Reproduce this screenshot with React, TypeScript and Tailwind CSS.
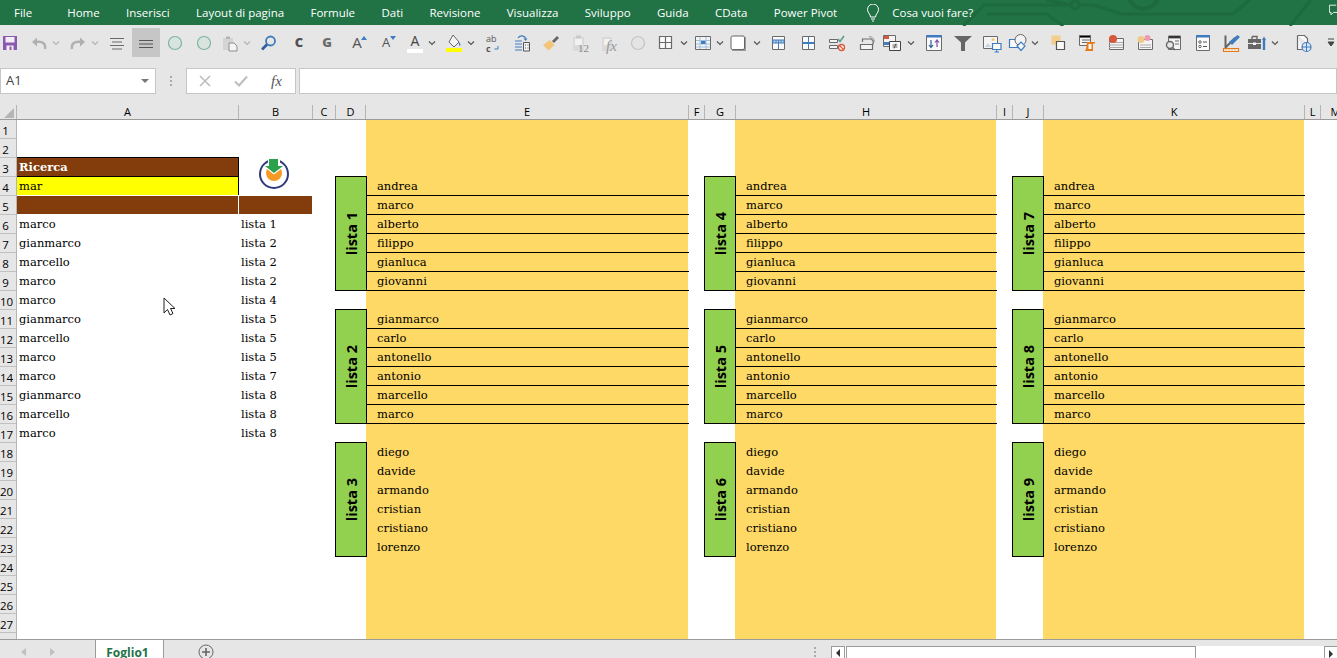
import type { ReactNode } from "react";

const tabs = ["Home", "Inserisci", "Layout di pagina", "Formule", "Dati", "Revisione", "Visualizza", "Sviluppo", "Guida", "CData", "Power Pivot"];

const results = [
  ["marco", "lista 1"],
  ["gianmarco", "lista 2"],
  ["marcello", "lista 2"],
  ["marco", "lista 2"],
  ["marco", "lista 4"],
  ["gianmarco", "lista 5"],
  ["marcello", "lista 5"],
  ["marco", "lista 5"],
  ["marco", "lista 7"],
  ["gianmarco", "lista 8"],
  ["marcello", "lista 8"],
  ["marco", "lista 8"],
];

const names = [
  ["andrea", "marco", "alberto", "filippo", "gianluca", "giovanni"],
  ["gianmarco", "carlo", "antonello", "antonio", "marcello", "marco"],
  ["diego", "davide", "armando", "cristian", "cristiano", "lorenzo"],
];

const rowNumbers = Array.from({ length: 27 }, (_, i) => i + 1);

const serif = "font-['DejaVu_Serif',serif] text-[11.5px] text-black";

function Icon({ ml, children }: { ml: string; children: ReactNode }) {
  return (
    <svg viewBox="0 0 20 20" className={`h-5 w-5 shrink-0 overflow-visible ${ml}`}>
      {children}
    </svg>
  );
}

function Caret({ ml, light }: { ml: string; light?: boolean }) {
  return (
    <svg viewBox="0 0 8 8" className={`h-2 w-2 shrink-0 ${ml}`}>
      <path d="M1 2.5 4 5.5 7 2.5" fill="none" stroke={light ? "#b4b4b4" : "#555"} strokeWidth="1.2" />
    </svg>
  );
}

function Letter({ ml, className, children }: { ml: string; className: string; children: ReactNode }) {
  return <span className={`flex h-5 w-5 shrink-0 items-center justify-center font-['Open_Sans',sans-serif] ${ml} ${className}`}>{children}</span>;
}

function Toolbar() {
  const gray = "#6a6a6a";
  const blue = "#3f7cbf";
  return (
    <div className="flex h-[35px] items-center overflow-hidden bg-[#e6e6e6]">
      <Icon ml="ml-0">
        <path d="M3 3h14v14H3z" fill="#8a5aae" />
        <path d="M5.500 4h9v5.500h-9zM6.500 12.500h7V17h-7z" fill="#f3eef7" />
        <path d="M9.500 13.500h2V17h-2z" fill="#8a5aae" />
      </Icon>
      <Icon ml="ml-[9px]">
        <path d="M16 16c1-5-2-8-9-7" fill="none" stroke="#b0b0b0" strokeWidth="2.400" />
        <path d="M3 9 8 4.500v9z" fill="#b0b0b0" />
      </Icon>
      <Caret ml="ml-[3px]" light />
      <Icon ml="ml-2">
        <path d="M4 16c-1-5 2-8 9-7" fill="none" stroke="#b0b0b0" strokeWidth="2.400" />
        <path d="M17 9 12 4.500v9z" fill="#b0b0b0" />
      </Icon>
      <Caret ml="ml-[3px]" light />
      <Icon ml="ml-2">
        <path d="M3 5.500h14M5 9h10M3 12.500h14M5 16h10" stroke={gray} strokeWidth="1" />
      </Icon>
      <div className="ml-[5px] flex h-[29px] w-[28px] shrink-0 items-center justify-center bg-[#c6c6c6]">
        <svg viewBox="0 0 20 20" className="h-5 w-5">
          <path d="M3 7.500h14M3 11h14M3 14.500h14" stroke="#555" strokeWidth="1" />
        </svg>
      </div>
      <Icon ml="ml-[5px]">
        <circle cx="10" cy="10" r="6.500" fill="#d9e4df" stroke="#7fb3a1" strokeWidth="1.200" />
      </Icon>
      <Icon ml="ml-[9px]">
        <circle cx="10" cy="10" r="6.500" fill="#d9e4df" stroke="#7fb3a1" strokeWidth="1.200" />
      </Icon>
      <Icon ml="ml-[6px]">
        <path d="M3 5h10v12H3z" fill="#d4d4d4" />
        <path d="M6 3.500h4V6H6z" fill="#b4b4b4" />
        <path d="M9 10h5l3 3v5H9z" fill="#f4f4f4" stroke="#8d8d8d" strokeWidth="1" />
      </Icon>
      <Caret ml="ml-[3px]" light />
      <Icon ml="ml-2">
        <circle cx="11.500" cy="8" r="4.500" fill="none" stroke={blue} strokeWidth="1.800" />
        <path d="M8 11.500 3 16.500" stroke="#2f5f9e" strokeWidth="2.600" />
      </Icon>
      <Letter ml="ml-2.5" className="text-[13px] font-extrabold text-[#505050]">C</Letter>
      <Letter ml="ml-2" className="text-[13px] font-extrabold text-[#6a6a6a]">G</Letter>
      <span className="relative ml-2.5">
        <Letter ml="ml-0" className="text-[15px] text-[#555]">A</Letter>
        <svg viewBox="0 0 6 4" className="absolute right-0 top-[3px] h-1 w-1.5"><path d="M0 4 3 0l3 4z" fill={blue} /></svg>
      </span>
      <span className="relative ml-[9px]">
        <Letter ml="ml-0" className="text-[13px] text-[#555]">A</Letter>
        <svg viewBox="0 0 6 4" className="absolute right-0 top-[3px] h-1 w-1.5"><path d="M0 0h6L3 4z" fill={blue} /></svg>
      </span>
      <span className="relative ml-[9px] flex h-5 w-5 flex-col items-center">
        <span className="font-['Open_Sans',sans-serif] text-[14px] leading-[15px] text-[#444]">A</span>
        <span className="mt-[1px] h-[4px] w-4 bg-white" />
      </span>
      <Caret ml="ml-[3px]" />
      <Icon ml="ml-2">
        <path d="M9 2 15 9l-5 5-5-5z" fill="#f4f4f4" stroke="#666" strokeWidth="1" />
        <path d="M15 9c1.500 2 2 3 1 4-1-.5-1.500-2-1-4z" fill={blue} />
        <path d="M2 15h16v4H2z" fill="#ffff00" />
      </Icon>
      <Caret ml="ml-[3px]" />
      <Icon ml="ml-[7px]">
        <text x="4" y="8.500" fontSize="9" fontFamily="Open Sans" fill="#555">ab</text>
        <text x="4" y="19" fontSize="9" fontFamily="Open Sans" fontWeight="700" fill="#555">c</text>
        <path d="M16 13v3h-3.500" fill="none" stroke={blue} strokeWidth="1" />
      </Icon>
      <Icon ml="ml-2.5">
        <path d="M3 8h7M3 11h7M3 14h7M3 17h7" stroke={blue} strokeWidth="1.200" />
        <path d="M6 5c2-3 6-3 8 .5" fill="none" stroke={blue} strokeWidth="1.200" />
        <path d="M11.500 5.500h4l-2 2.500z" fill={blue} />
        <path d="M11.500 9.500h6v8.500h-6z" fill="#f4f4f4" stroke="#555" strokeWidth="1" />
        <path d="M13 12h1M15.500 12h1M13 15h1M15.500 15h1" stroke="#555" strokeWidth="1" />
      </Icon>
      <Icon ml="ml-[9px]">
        <path d="M2 12 9 7l4.500 5-6 5.500z" fill="#f3c677" />
        <path d="M11 8 16 3l2 2-5 5z" fill="#666" />
      </Icon>
      <Icon ml="ml-[9px]">
        <path d="M3 4h11v14H3z" fill="#dadada" />
        <path d="M5 6h7v6H5z" fill="#f2f2f2" />
        <path d="M6 2.500h5V5H6z" fill="#c8c8c8" />
        <text x="8" y="18.500" fontSize="11" fontFamily="Liberation Serif" fill="#888">12</text>
      </Icon>
      <Icon ml="ml-[9px]">
        <path d="M3 4h10v14H3z" fill="#dadada" />
        <path d="M5 6h6v6H5z" fill="#f2f2f2" />
        <text x="7" y="18" fontSize="15" fontStyle="italic" fontFamily="Liberation Serif" fill="#999">fx</text>
      </Icon>
      <Icon ml="ml-[9px]">
        <circle cx="10" cy="10" r="6.500" fill="#e4e4e4" stroke="#c4c4c4" strokeWidth="1.200" />
      </Icon>
      <Icon ml="ml-2">
        <path d="M3.500 3.500h12v12h-12zM9.500 3.500v12M3.500 9.500h12" fill="#fafafa" stroke={gray} strokeWidth="1.200" />
      </Icon>
      <Caret ml="ml-1" />
      <Icon ml="ml-[5px]">
        <path d="M2.500 3.500h15v13h-15z" fill="#f4f4f4" stroke={gray} strokeWidth="1" />
        <path d="M3 7.500h14M3 11h14M3 14h14M7 4v12M13 4v12" stroke="#9fc0dd" strokeWidth="1" />
        <path d="M8 8h4.500v3H8z" fill={blue} />
      </Icon>
      <Caret ml="ml-[3px]" />
      <Icon ml="ml-1">
        <path d="M4 4h14v14H4z" fill="#9a9a9a" />
        <rect x="3" y="3" width="13.500" height="13.500" rx="1.500" fill="#fff" stroke="#666" strokeWidth="1" />
      </Icon>
      <Caret ml="ml-[5px]" />
      <Icon ml="ml-2">
        <path d="M3.500 3.500h12v13h-12z" fill="#fafafa" stroke={gray} strokeWidth="1" />
        <path d="M4 7h11v3H4z" fill="#bcd3ea" stroke={blue} strokeWidth="1" />
        <path d="M7 7v3M9.500 7v3M12 7v3M9.500 10v6" stroke={blue} strokeWidth="1" />
      </Icon>
      <Icon ml="ml-2.5">
        <path d="M3.500 3.500h12v13h-12z" fill="#fafafa" stroke={gray} strokeWidth="1" />
        <path d="M3.500 10h12" stroke={blue} strokeWidth="2" />
        <path d="M9.500 4v5.500M9.500 11v5" stroke={blue} strokeWidth="1" />
      </Icon>
      <Icon ml="ml-2">
        <path d="M2.500 6.500h8v3h-8zM2.500 12.500h8v3h-8z" fill="#f4f4f4" stroke={gray} strokeWidth="1" />
        <path d="M11 6 13 8.500 17 3" fill="none" stroke="#5f9e86" strokeWidth="1.600" />
        <circle cx="14.500" cy="14.500" r="3" fill="#fff" stroke="#d9573a" strokeWidth="1.300" />
        <path d="M12.500 12.500 16.500 16.500" stroke="#d9573a" strokeWidth="1.200" />
      </Icon>
      <Icon ml="ml-2.5">
        <path d="M3.500 11.500h12v5h-12z" fill="#f4f4f4" stroke={gray} strokeWidth="1.200" />
        <path d="M5.500 9V6h9l2 3-1 3" fill="none" stroke={gray} strokeWidth="1.200" />
        <path d="M12 3.500c3 0 5 2 5.500 5M13 5.500c2 0 3 1 3.500 3" fill="none" stroke="#999" strokeWidth="1" />
      </Icon>
      <Icon ml="ml-[5px]">
        <path d="M1.500 2.500h12v11h-12z" fill="#f4f4f4" stroke={gray} strokeWidth="1" />
        <path d="M2 3h5v3H2z" fill="#d9573a" />
        <path d="M2 9h5v3H2z" fill="#3f7cbf" />
        <path d="M7.500 8.500h11v9h-11z" fill="#fafafa" stroke="#444" strokeWidth="1" />
        <path d="M10.500 12h5M10.500 14h5M14 10.500 12 15.500" stroke="#444" strokeWidth=".8" />
      </Icon>
      <Caret ml="ml-[5px]" />
      <Icon ml="ml-[9px]">
        <path d="M2.500 2.500h15v15h-15z" fill="#fafafa" stroke={gray} strokeWidth="1" />
        <path d="M2.500 2h15v2.500h-15z" fill={blue} />
        <path d="M7 7v7M5 12l2 2.500L9 12" fill="none" stroke="#2f5f9e" strokeWidth="1.200" />
        <path d="M13 14V7M11 9.500 13 7l2 2.500" fill="none" stroke="#7d4fa8" strokeWidth="1.200" />
      </Icon>
      <Icon ml="ml-[9px]">
        <path d="M1 3h18l-7 6.500V18H8V9.500z" fill="#666" />
      </Icon>
      <Icon ml="ml-[9px]">
        <path d="M1.500 3.500h14v12h-14z" fill="#f4f4f4" stroke={gray} strokeWidth="1" />
        <path d="M3 14l3-4 3 4z" fill="#c8d6e6" />
        <circle cx="11" cy="6.500" r="1.500" fill="#f2c66d" />
        <path d="M10.500 10.500h8.500v6h-8.500z" fill="#fafafa" stroke={blue} strokeWidth="1.200" />
        <path d="M14.700 17v2M12.500 19h4.500" stroke={blue} strokeWidth="1" />
      </Icon>
      <Icon ml="ml-[6px]">
        <path d="M1.500 6.500h9v8h-9z" fill="#fafafa" stroke={blue} strokeWidth="1.200" />
        <circle cx="12.500" cy="7" r="5.500" fill="#f4f4f4" stroke="#666" strokeWidth="1" />
        <path d="M9 13l4-4 4 4-4 4.500z" fill="#fafafa" stroke={blue} strokeWidth="1.200" />
      </Icon>
      <Caret ml="ml-[3px]" />
      <Icon ml="ml-[9px]">
        <path d="M3.500 2.500h9v9h-9z" fill="#f3cd8c" />
        <path d="M8.500 8.500h8v8h-8z" fill="#fafafa" stroke="#555" strokeWidth="1.200" />
      </Icon>
      <Icon ml="ml-[9px]">
        <path d="M2.500 2.500h11v10h-11z" fill="#f4f4f4" stroke={gray} strokeWidth="1" />
        <path d="M2.500 2.500h11v2h-11zM5 7h8M5 9.500h5" stroke={gray} strokeWidth="1" />
        <path d="M10 9h8v1.500h-2V18H7.500l1.500-1.500z" fill="#e67a17" />
        <path d="M11.500 11h3v5h-3z" fill="#fafafa" />
      </Icon>
      <Icon ml="ml-[9px]">
        <path d="M3.500 5.500h14v11h-14z" fill="#f4f4f4" stroke={gray} strokeWidth="1" />
        <path d="M3 9.500h14M3 12h14M3 14.500h14" stroke="#aaa" strokeWidth="1" />
        <circle cx="7" cy="6" r="4" fill="#d9573a" />
      </Icon>
      <Icon ml="ml-[9px]">
        <path d="M3.500 6.500h14v10h-14z" fill="#f4f4f4" stroke={gray} strokeWidth="1" />
        <path d="M5 12h11M5 14.500h11" stroke="#aaa" strokeWidth="1" />
        <circle cx="6" cy="6.500" r="3.500" fill="#f0c987" />
        <circle cx="12.500" cy="5" r="3" fill="#ef9ab0" />
      </Icon>
      <Icon ml="ml-2">
        <path d="M5.500 3.500h12v13h-12z" fill="#f4f4f4" stroke={gray} strokeWidth="1" />
        <path d="M5.500 3h12v2h-12zM12 8h4M12 11h4" stroke={gray} strokeWidth="1" />
        <circle cx="7" cy="12" r="3.500" fill="#e6e6e6" stroke="#666" strokeWidth="1.400" />
        <path d="M9.500 14.500 12 17" stroke="#666" strokeWidth="1.600" />
      </Icon>
      <Icon ml="ml-2.5">
        <path d="M3.500 2.500h13v15h-13z" fill="#fafafa" stroke={gray} strokeWidth="1" />
        <path d="M3 2h14v2.500H3z" fill={blue} />
        <circle cx="7" cy="9" r="1.200" fill="none" stroke="#555" strokeWidth=".9" />
        <circle cx="7" cy="13.500" r="1.200" fill="none" stroke="#555" strokeWidth=".9" />
        <path d="M10 9h4M10 13.500h4" stroke="#555" strokeWidth="1" />
      </Icon>
      <Icon ml="ml-[9px]">
        <path d="M3.500 2.500v12l9-9v-1" fill="none" stroke="#666" strokeWidth="2" />
        <path d="M7 9 15.500 2 18 4 10 12z" fill={blue} />
        <path d="M1.500 15.500h15v3h-15z" fill="#f4f4f4" stroke="#e67a17" strokeWidth="1.200" />
        <path d="M4 16v1.500M7 16v1.500M10 16v1.500M13 16v1.500" stroke="#e67a17" strokeWidth=".8" />
      </Icon>
      <Icon ml="ml-[5px]">
        <path d="M1 6h13v10H1z" fill="#666" />
        <path d="M5 3.500h5V6M5 6V3.500" fill="none" stroke="#666" strokeWidth="1.400" />
        <path d="M1 10.500h13" stroke="#e6e6e6" strokeWidth="1" />
        <path d="M6 9.500h3v2.500H6z" fill="#fafafa" />
        <path d="M17 6v11" stroke={blue} strokeWidth="2.400" />
        <path d="M15 7l2-3.500L19 7z" fill={blue} />
      </Icon>
      <Caret ml="ml-1" />
      <Icon ml="ml-3.5">
        <path d="M4.500 2.500h7l3 3v5M4.500 2.500v14h5" fill="#fafafa" stroke={gray} strokeWidth="1.200" />
        <circle cx="13.500" cy="14" r="4.500" fill="#dce8f4" stroke={blue} strokeWidth="1.200" />
        <path d="M9 14h9M13.500 9.500v9" stroke={blue} strokeWidth="1" />
      </Icon>
      <svg viewBox="0 0 8 10" className="ml-3.5 h-2.5 w-2 shrink-0">
        <path d="M1 1h6M1 4h6L4 8z" fill="#444" stroke="#444" strokeWidth="1" />
      </svg>
    </div>
  );
}

function TitleBar() {
  return (
    <div className="relative flex h-[25px] items-center bg-[#217346] pl-[14px] font-['Open_Sans',sans-serif] text-[11.5px] text-white">
      <svg viewBox="0 0 1431 78" className="absolute right-0 top-0 h-[26px] w-[477px]">
        <g fill="none" stroke="#1c6a3e" strokeWidth="9">
          <path d="M310 78 372 15H632M560 0 632 15M658 15H700L785 42H1118L1170 0" />
          <circle cx="645" cy="15" r="12" />
          <circle cx="850" cy="-20" r="46" strokeWidth="13" />
          <path d="M1290 78 1352 0M610 78 560 42H380" />
        </g>
      </svg>
      <span className="relative mr-[35px]">File</span>
      <div className="relative flex gap-[26.3px]">
        {tabs.map((tab) => (
          <span key={tab}>{tab}</span>
        ))}
      </div>
      <svg viewBox="0 0 14 18" className="relative ml-[29px] h-[18px] w-[14px]">
        <path d="M4.500 13c0-3-3-4-3-7.500a5.500 5.500 0 0 1 11 0c0 3.500-3 4.500-3 7.500zM5 15h4M6 17h2" fill="none" stroke="#fff" strokeWidth="1" />
      </svg>
      <span className="relative ml-[12px]">Cosa vuoi fare?</span>
      <svg viewBox="0 0 10 14" className="absolute right-0 top-[3px] h-[14px] w-[8px]">
        <path d="M9 1H.5v9h2v3l3-3H10" fill="none" stroke="#fff" strokeWidth="1.100" />
      </svg>
    </div>
  );
}

function FormulaBar() {
  return (
    <div className="flex h-[45px] items-start bg-[#e6e6e6] pt-[8px] font-['Open_Sans',sans-serif]">
      <div className="flex h-[26px] w-[156px] items-center justify-between border border-[#c6c6c6] bg-white pl-[5px] pr-[6px] text-[13px] text-[#444]">
        A1
        <span className="h-0 w-0 border-x-[4px] border-t-[4px] border-x-transparent border-t-[#777]" />
      </div>
      <div className="ml-[14px] mt-[8px] flex w-[3px] flex-col gap-[2px]">
        <span className="h-[2px] w-[2px] bg-[#aaa]" />
        <span className="h-[2px] w-[2px] bg-[#aaa]" />
        <span className="h-[2px] w-[2px] bg-[#aaa]" />
      </div>
      <div className="ml-[13px] flex h-[26px] w-[110px] items-center border border-[#c6c6c6] bg-white">
        <svg viewBox="0 0 12 12" className="ml-[12px] h-3 w-3"><path d="M1 1 11 11M11 1 1 11" stroke="#bdbdbd" strokeWidth="1.600" /></svg>
        <svg viewBox="0 0 14 12" className="ml-[23px] h-3 w-[14px]"><path d="M1 6.500 5 10.500 13 1.500" fill="none" stroke="#bdbdbd" strokeWidth="2" /></svg>
        <span className="ml-[23px] font-['Liberation_Serif',serif] text-[15px] italic text-[#555]">fx</span>
      </div>
      <div className="ml-[3px] h-[26px] flex-1 border border-[#c6c6c6] bg-white" />
    </div>
  );
}

function ColumnHeaders() {
  const cols: [string, string][] = [
    ["A", "w-[222px]"],
    ["B", "w-[74px]"],
    ["C", "w-[23px]"],
    ["D", "w-[30px]"],
    ["E", "w-[323px]"],
    ["F", "w-[16px]"],
    ["G", "w-[31px]"],
    ["H", "w-[261px]"],
    ["I", "w-[16px]"],
    ["J", "w-[31px]"],
    ["K", "w-[261px]"],
    ["L", "w-[16px]"],
    ["M", "w-[30px]"],
  ];
  return (
    <div className="flex h-[15px] overflow-hidden border-b border-[#9b9b9b] bg-[#e6e6e6] font-['Open_Sans',sans-serif] text-[11px] leading-[14px] text-black">
      <div className="relative w-[17px] shrink-0 border-r border-[#b5b5b5]">
        <span className="absolute bottom-[1px] right-[2px] h-0 w-0 border-b-[10px] border-l-[10px] border-b-[#b5b5b5] border-l-transparent" />
      </div>
      {cols.map(([name, width]) => (
        <div key={name} className={`${width} shrink-0 border-r border-[#b5b5b5] text-center`}>
          {name}
        </div>
      ))}
    </div>
  );
}

function RowHeaders() {
  return (
    <div className="w-[17px] shrink-0 overflow-hidden border-r border-[#b5b5b5] bg-[#e6e6e6] font-['Open_Sans',sans-serif] text-[11.5px] text-black">
      {rowNumbers.map((n) => (
        <div key={n} className="h-[19px] border-b border-[#c0c0c0] pt-[3px] leading-[15px]">
          <span className="block w-[11px] text-center">{n}</span>
        </div>
      ))}
    </div>
  );
}

function SearchLogo() {
  return (
    <svg viewBox="0 0 32 32" className="h-8 w-8">
      <circle cx="16" cy="16" r="14" fill="#fff" stroke="#2d3a7c" strokeWidth="2" />
      <circle cx="16" cy="15" r="8" fill="#f79a25" />
      <path d="M10 0h12v8h5L16 16.500 5 8h5z" fill="#fff" />
      <path d="M11 1h9v7h5L16 15 7 8h4z" fill="#2ba14b" />
    </svg>
  );
}

function SearchColumns() {
  return (
    <>
      <div className={`w-[222px] shrink-0 ${serif}`}>
        <div className="h-[37px]" />
        <div className="h-[20px] border-y border-r border-black bg-[#833c0b] pl-[2px] font-bold leading-[18px] text-white">Ricerca</div>
        <div className="h-[18px] border-r border-black bg-[#ffff00] pl-[2px] leading-[19px]">mar</div>
        <div className="mt-[1px] mr-[1px] h-[18px] bg-[#833c0b]" />
        <div className="mt-[1px]">
          {results.map(([name], i) => (
            <div key={i} className="h-[19px] pl-[2px] leading-[19px]">
              {name}
            </div>
          ))}
        </div>
      </div>
      <div className={`w-[73px] shrink-0 ${serif}`}>
        <div className="flex h-[76px] items-start justify-center pr-[3px] pt-[38px]">
          <SearchLogo />
        </div>
        <div className="h-[18px] bg-[#833c0b]" />
        <div className="mt-[1px]">
          {results.map(([, list], i) => (
            <div key={i} className="h-[19px] pl-[2px] leading-[19px]">
              {list}
            </div>
          ))}
        </div>
      </div>
    </>
  );
}

function ListLabel({ name }: { name: number }) {
  return (
    <div className="relative z-10 flex h-[115px] w-[32px] items-center justify-center border border-black bg-[#92d050] pl-[2px]">
      <span className="rotate-180 font-['Open_Sans',sans-serif] text-[14.5px] font-bold text-black [writing-mode:vertical-rl]">lista {name}</span>
    </div>
  );
}

function ListGroup({ start, width, lineWidth, ml }: { start: number; width: string; lineWidth: string; ml: string }) {
  return (
    <div className={`flex shrink-0 ${ml}`}>
      <div className="w-[31px] shrink-0 pt-[56px]">
        <div className="flex flex-col gap-[18px]">
          {names.map((_, i) => (
            <ListLabel key={i} name={start + i} />
          ))}
        </div>
      </div>
      <div className={`${width} shrink-0 bg-[#ffd966] pt-[57px] ${serif}`}>
        <div className="flex flex-col gap-[19px]">
          {names.map((group, i) => (
            <div key={i}>
              {group.map((name) => (
                <div key={name} className={`h-[19px] pl-[11px] leading-[19px] ${lineWidth} ${i < 2 ? "border-b border-black" : ""}`}>
                  {name}
                </div>
              ))}
            </div>
          ))}
        </div>
      </div>
    </div>
  );
}

function BottomBar() {
  return (
    <div className="flex h-[19px] items-start overflow-hidden border-t border-[#9b9b9b] bg-[#e6e6e6]">
      <svg viewBox="0 0 40 10" className="ml-[20px] mt-[7px] h-2.5 w-10"><path d="M6 1v8L1 5zM30 1v8l5-4z" fill="#c0c0c0" /></svg>
      <div className="-mt-[1px] ml-[35px] flex h-[19px] w-[69px] justify-center border-x border-[#9b9b9b] bg-white pr-[4px] pt-[5px] font-['Open_Sans',sans-serif] text-[12px] font-bold leading-[18px] text-[#217346]">
        Foglio1
      </div>
      <svg viewBox="0 0 16 16" className="ml-[34px] mt-[4px] h-4 w-4 shrink-0">
        <circle cx="8" cy="8" r="7" fill="none" stroke="#666" strokeWidth="1" />
        <path d="M8 4v8M4 8h8" stroke="#666" strokeWidth="1.600" />
      </svg>
      <div className="ml-[600px] mt-[7px] flex w-[2px] flex-col gap-[2px]">
        <span className="h-[2px] w-[2px] bg-[#aaa]" />
        <span className="h-[2px] w-[2px] bg-[#aaa]" />
        <span className="h-[2px] w-[2px] bg-[#aaa]" />
      </div>
      <div className="ml-[15px] mt-[6px] flex h-[14px] flex-1 bg-white">
        <div className="flex h-full w-[14px] items-center justify-center border border-[#9b9b9b]">
          <span className="h-0 w-0 border-y-[4px] border-r-[4px] border-y-transparent border-r-[#333]" />
        </div>
        <div className="ml-[1px] h-full w-[350px] border border-b-0 border-[#9b9b9b]" />
        <div className="flex-1" />
        <div className="flex h-full w-[13px] items-center justify-center border-l border-t border-[#9b9b9b]">
          <span className="h-0 w-0 border-y-[4px] border-l-[4px] border-y-transparent border-l-[#333]" />
        </div>
      </div>
    </div>
  );
}

export default function App() {
  return (
    <div className="relative h-[658px] w-[1337px] overflow-hidden bg-white">
      <TitleBar />
      <Toolbar />
      <FormulaBar />
      <ColumnHeaders />
      <div className="flex h-[519px] overflow-hidden">
        <RowHeaders />
        <SearchColumns />
        <div className="w-[23px] shrink-0" />
        <ListGroup start={1} width="w-[322px]" lineWidth="w-[323px]" ml="ml-0" />
        <ListGroup start={4} width="w-[261px]" lineWidth="w-[262px]" ml="ml-[16px]" />
        <ListGroup start={7} width="w-[261px]" lineWidth="w-[262px]" ml="ml-[16px]" />
      </div>
      <BottomBar />
      <svg viewBox="0 0 13 20" className="absolute left-[163px] top-[297px] h-5 w-[13px]">
        <path d="M1 1v15l3.500-3.500L7 18l3-1.500-2.500-5H12z" fill="#fff" stroke="#222" strokeWidth="1" />
      </svg>
    </div>
  );
}
